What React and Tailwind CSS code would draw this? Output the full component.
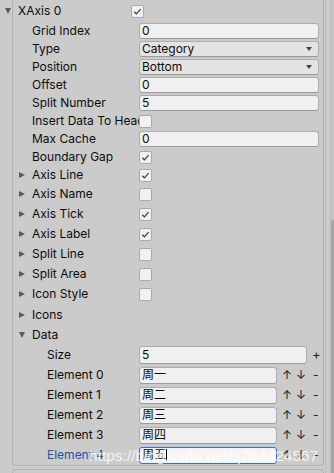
import React from 'react';

const FONT = "font-['Inter','Noto_Sans_CJK_SC',sans-serif]";

// ── small drawings ────────────────────────────────────────────────────────────
const Tri = ({ open }) =>
  open ? (
    <span className="inline-block w-0 h-0 border-l-[3.5px] border-r-[3.5px] border-t-[6px] border-l-transparent border-r-transparent border-t-[#5a5a5a]" />
  ) : (
    <span className="inline-block w-0 h-0 border-t-[3.5px] border-b-[3.5px] border-l-[6px] border-t-transparent border-b-transparent border-l-[#5a5a5a]" />
  );

const Check = ({ on }) => (
  <div className="w-[13px] h-[13px] bg-[#f1f1f1] border border-[#a9a9a9] rounded-[2px] flex items-center justify-center">
    {on && (
      <svg width="9" height="9" viewBox="0 0 9 9">
        <path d="M1.3 4.8 L3.4 6.8 L7.6 2.2" fill="none" stroke="#3a3a3a" strokeWidth="1.2" />
      </svg>
    )}
  </div>
);

const Field = ({ value, w = 'w-[180px]', h = 'h-[16px]', focus = false }) => (
  <div
    className={`${w} ${h} rounded-[3px] border flex items-center px-[2px] ${
      focus ? 'bg-[#f4f4f4] border-[#3d6fb0]' : 'bg-[#f0f0f0] border-[#adadad] border-b-[#9c9c9c]'
    }`}
  >
    <span className="leading-none">{value}</span>
    {focus && <span className="w-px h-[12px] bg-black" />}
  </div>
);

const Dropdown = ({ value }) => (
  <div className="w-[180px] h-[16px] rounded-[3px] border border-[#adadad] border-b-[#9a9a9a] bg-[#e3e3e3] flex items-center justify-between pl-[2px] pr-[6px]">
    <span className="leading-none">{value}</span>
    <span className="w-0 h-0 border-l-[3.5px] border-r-[3.5px] border-t-[4px] border-l-transparent border-r-transparent border-t-[#444]" />
  </div>
);

// ── row ───────────────────────────────────────────────────────────────────────
const Row = ({ h = 'h-[18px]', pad, arrow, label, labelColor = '', children }) => (
  <div className={`flex items-center ${h}`}>
    <div className={`w-[126px] flex items-center whitespace-nowrap overflow-hidden ${pad}`}>
      {arrow !== undefined && (
        <span className="w-[13px] flex items-center">
          <Tri open={arrow} />
        </span>
      )}
      <span className={labelColor}>{label}</span>
    </div>
    {children}
  </div>
);

const Arrows = () => (
  <div className="flex items-center ml-[5px] text-[12px] text-[#222]">
    <span className="w-[14px]">↑</span>
    <span className="w-[15px]">↓</span>
    <span className="ml-[2px]">-</span>
  </div>
);

const foldouts = [
  ['Axis Line', true],
  ['Axis Name', false],
  ['Axis Tick', true],
  ['Axis Label', true],
  ['Split Line', false],
  ['Split Area', false],
  ['Icon Style', false],
];

const elements = ['周一', '周二', '周三', '周四'];

export default function App() {
  return (
    <div className={`w-[334px] h-[473px] bg-[#cbcbcb] relative overflow-hidden flex text-[12px] text-[#0b0b0b] ${FONT}`}>
      {/* inspector column */}
      <div className="w-[324px] flex flex-col pl-[12px]">
        <div className="h-[467px] border-l border-r border-b border-[#b3b3b3] rounded-bl-[4px] rounded-br-[4px]">
          {/* header */}
          <div className="flex items-center h-[22px]">
            <div className="w-[126px] flex items-center -ml-[8px]">
              <span className="w-[13px] flex items-center">
                <Tri open />
              </span>
              <span>XAxis 0</span>
            </div>
            <Check on />
          </div>

          <Row pad="pl-[19px]" label="Grid Index"><Field value="0" /></Row>
          <Row pad="pl-[19px]" label="Type"><Dropdown value="Category" /></Row>
          <Row pad="pl-[19px]" label="Position"><Dropdown value="Bottom" /></Row>
          <Row pad="pl-[19px]" label="Offset"><Field value="0" /></Row>
          <Row pad="pl-[19px]" label="Split Number"><Field value="5" /></Row>
          <Row pad="pl-[19px]" label="Insert Data To Head"><Check /></Row>
          <Row pad="pl-[19px]" label="Max Cache"><Field value="0" /></Row>
          <Row pad="pl-[19px]" label="Boundary Gap"><Check on /></Row>

          {foldouts.map(([name, on], i) => (
            <Row key={name} h={i === 0 ? 'h-[18px]' : 'h-[20px]'} pad="pl-[6px]" arrow={false} label={name}>
              <Check on={on} />
            </Row>
          ))}
          <Row h="h-[21px]" pad="pl-[6px]" arrow={false} label="Icons" />
          <Row h="h-[20px]" pad="pl-[6px]" arrow label="Data" />

          <Row h="h-[20px]" pad="pl-[34px]" label="Size">
            <Field value="5" w="w-[168px]" h="h-[18px]" />
            <span className="ml-[5px] text-[13px] text-[#222]">+</span>
          </Row>
          {elements.map((v, i) => (
            <Row key={i} h="h-[20px]" pad="pl-[34px]" label={`Element ${i}`}>
              <Field value={v} w="w-[138px]" h="h-[17px]" />
              <Arrows />
            </Row>
          ))}
          <Row h="h-[20px]" pad="pl-[34px]" label="Element 4" labelColor="text-[#1d56a5]">
            <Field value="周五" w="w-[138px]" h="h-[17px]" focus />
            <Arrows />
          </Row>
        </div>
        <div className="mt-[3px] h-[10px] border-l border-r border-t border-[#b3b3b3] rounded-tl-[4px] rounded-tr-[4px]" />
      </div>

      {/* scrollbar */}
      <div className="flex-1 flex border-l border-[#bdbdbd] ml-px">
        <div className="w-[4px]" />
        <div className="flex-1 flex flex-col border-l border-[#bcbcbc] bg-[#c4c4c4]">
          <div className="h-[220px]" />
          <div className="flex-1 bg-[#a6a6a6] rounded-tl-[2px]" />
        </div>
      </div>

      {/* watermark */}
      <div className="absolute left-[89px] top-[444px] text-[15.5px] text-white/80 font-['Liberation_Sans',sans-serif] whitespace-nowrap pointer-events-none">
        https://blog.csdn.net/q764424567
      </div>
    </div>
  );
}
